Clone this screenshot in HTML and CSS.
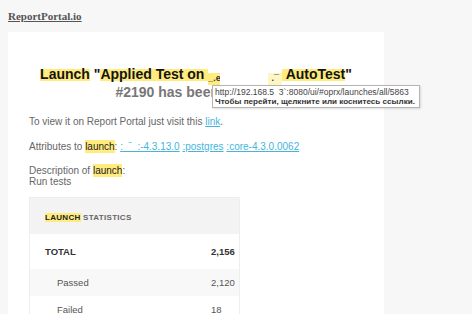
FILE: index.html
```html
<!DOCTYPE html>
<html>
<head>
<meta charset="utf-8">
<link rel="stylesheet" href="styles.css">
</head>
<body>
<div class="page">
  <div class="brand"><a href="#">ReportPortal.io</a></div>
  <div class="card">
    <h1 class="title"><span class="hl">Launch</span> "<span class="hl">Applied Test on </span><span class="redact"><span class="rd-a">_.e</span><span class="rd-b"></span><span class="rd-c">.¯</span></span><span class="hl"> AutoTest</span>"<br><span class="sub">#2190 has been finished</span></h1>
    <p>To view it on Report Portal just visit this <a href="#">link</a>.</p>
    <p>Attributes to <span class="hls">launch</span>: <a href="#">:_ˉ_:-4.3.13.0</a> <a href="#">:postgres</a> <a href="#">:core-4.3.0.0062</a></p>
    <p class="last">Description of <span class="hls">launch</span>:<br>Run tests</p>
    <div class="stats">
      <div class="stats-head"><span class="hlh">LAUNCH</span>&nbsp;STATISTICS</div>
      <div class="row total"><span>TOTAL</span><span>2,156</span></div>
      <div class="row sub alt"><span>Passed</span><span>2,120</span></div>
      <div class="row sub"><span>Failed</span><span>18</span></div>
    </div>
  </div>
  <div class="tooltip">
    <div class="tt-url">http://192.168.5&nbsp;&nbsp;3`:8080/ui/#oprx/launches/all/5863</div>
    <div class="tt-hint">Чтобы перейти, щелкните или коснитесь ссылки.</div>
  </div>
</div>
</body>
</html>
```
FILE: styles.css
```css
html, body {
  margin: 0;
  padding: 0;
  background: #ffffff;
}

.page {
  position: relative;
  width: 472px;
  height: 314px;
  overflow: hidden;
  background: #f7f7f7;
  padding: 10px 0 0 8px;
  box-sizing: border-box;
}

.brand {
  font: bold 11px/13px "Liberation Serif", serif;
  margin-bottom: 9px;
}

.brand a {
  color: #555555;
  text-decoration: underline;
}

.card {
  width: 376px;
  height: 400px;
  background: #ffffff;
  padding: 35px 21px 0;
  box-sizing: border-box;
  font-family: "Liberation Sans", Arial, sans-serif;
}

.title {
  margin: 0 0 17px;
  font-size: 14px;
  line-height: 14px;
  font-weight: bold;
  text-align: center;
  color: #141414;
}

.hl {
  background: linear-gradient(#ffeb7e, #ffeb7e) 0 3px / 100% 12px no-repeat;
}

.redact {
  display: inline-flex;
  align-items: flex-end;
  width: 74px;
  height: 12px;
  vertical-align: -2px;
  font-size: 9px;
  line-height: 10px;
  color: #333333;
}

.rd-a {
  width: 12px;
  height: 12px;
  background: #ffeb7e;
}

.rd-b {
  width: 48px;
  height: 12px;
  background: #ffffff;
}

.rd-c {
  width: 14px;
  height: 12px;
  background: #fff6c4;
}

.sub {
  color: #777777;
}

p {
  margin: 0 0 13.5px;
  font-size: 10px;
  line-height: 11px;
  color: #666666;
}

p.last {
  margin-bottom: 10px;
}

p a {
  color: #45b5dc;
  text-decoration: underline;
}

.hls {
  background: #ffeb7e;
  color: #222222;
  padding: 1px 0;
}

.stats {
  width: 211px;
  border: 1px solid #eeeeee;
  border-bottom: none;
  box-sizing: border-box;
  font-size: 9.5px;
}

.stats-head {
  height: 36px;
  display: flex;
  align-items: center;
  padding: 2px 0 0 15px;
  box-sizing: border-box;
  background: #f3f3f3;
  font-size: 8px;
  font-weight: bold;
  letter-spacing: 0.3px;
  color: #666666;
}

.hlh {
  background: #ffeb7e;
  color: #222222;
}

.row {
  display: grid;
  grid-template-columns: 1fr 28px;
  align-items: center;
  padding-left: 15px;
  color: #555555;
}

.row.total {
  height: 35px;
  font-weight: bold;
  color: #333333;
}

.row.sub {
  height: 27px;
  padding-left: 27px;
}

.row.alt {
  background: #f8f8f8;
}

.tooltip {
  position: absolute;
  left: 212px;
  top: 85px;
  width: 208px;
  height: 23px;
  box-sizing: border-box;
  padding: 1px 0 0 2px;
  background: #ffffff;
  border: 1px solid #b4b4b4;
  box-shadow: 1px 1px 2px rgba(0, 0, 0, 0.12);
  font-family: "Liberation Sans", Arial, sans-serif;
  font-size: 8.5px;
  line-height: 10px;
  color: #444444;
  white-space: nowrap;
}

.tt-hint {
  font-size: 8.1px;
  font-weight: bold;
  color: #333333;
}
```
